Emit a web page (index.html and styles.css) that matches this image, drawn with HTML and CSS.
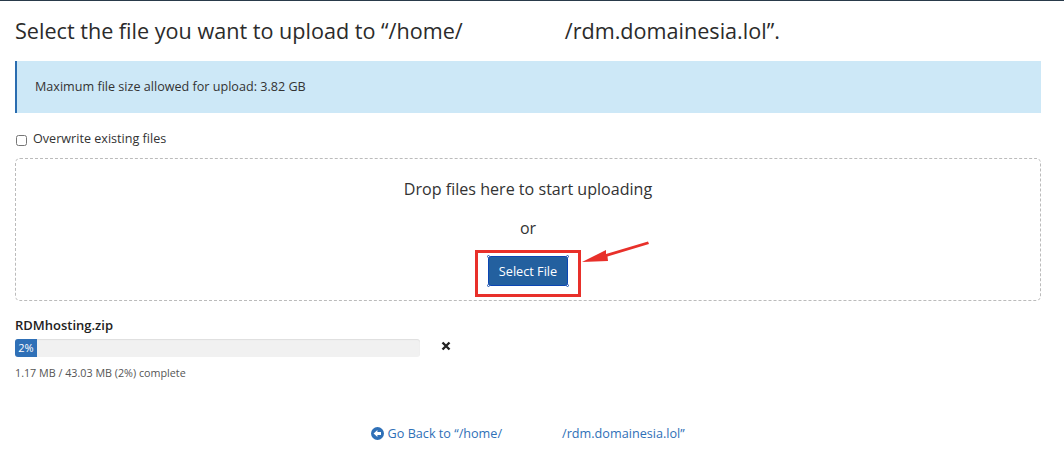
FILE: index.html
```html
<!DOCTYPE html>
<html lang="en">
<head>
    <meta charset="UTF-8">
    <title>File Upload</title>
    <link rel="stylesheet" href="styles.css">
</head>
<body>
    <main class="page">
        <h1>Select the file you want to upload to “/home/<span class="gap-title"></span>/rdm.domainesia.lol”.</h1>

        <div class="notice">Maximum file size allowed for upload: 3.82 GB</div>

        <label class="overwrite">
            <input type="checkbox"> Overwrite existing files
        </label>

        <section class="dropzone">
            <p class="drop-text">Drop files here to start uploading</p>
            <p class="drop-or">or</p>
            <div class="button-wrap">
                <button class="select-btn">Select File</button>
                <i class="handle tl"></i><i class="handle tr"></i><i class="handle bl"></i><i class="handle br"></i>
                <div class="callout"></div>
                <svg class="arrow" width="72" height="28" viewBox="0 0 72 28">
                    <path d="M0 21 L24 9 L24 13 L66 0.5 L67 3 L25.5 15.5 L26 20 Z" fill="#e8302a"/>
                </svg>
            </div>
        </section>

        <section class="upload">
            <div class="upload-name">RDMhosting.zip</div>
            <div class="upload-row">
                <div class="progress"><div class="progress-bar" style="width: 5.4%">2%</div></div>
                <svg class="cancel" width="10" height="10" viewBox="0 0 10 10">
                    <path d="M1.5 1.5 L8.5 8.5 M8.5 1.5 L1.5 8.5" stroke="#222" stroke-width="2.4" fill="none"/>
                </svg>
            </div>
            <div class="upload-status">1.17 MB / 43.03 MB (2%) complete</div>
        </section>

        <p class="back">
            <a href="#">
                <svg class="back-icon" width="13" height="13" viewBox="0 0 13 13">
                    <circle cx="6.5" cy="6.5" r="6.5" fill="#2f70b7"/>
                    <path d="M2.6 6.5 L6.4 2.9 V5 H10 V8 H6.4 V10.1 Z" fill="#fff"/>
                </svg>
                Go Back to “/home/<span class="gap-link"></span>/rdm.domainesia.lol”
            </a>
        </p>
    </main>
</body>
</html>
```

FILE: styles.css
```css
* {
    box-sizing: border-box;
}

html, body {
    height: 463px;
    overflow: hidden;
}

body {
    margin: 0;
    font-family: "Open Sans", sans-serif;
    color: #333;
    background-color: #fff;
    border-top: 1px solid #293a4a;
}

.page {
    padding: 0 23px 0 15px;
}

h1 {
    margin: 16px 0 0;
    font-size: 21.6px;
    line-height: 27px;
    font-weight: 400;
    color: #2b2b2b;
}

.gap-title {
    display: inline-block;
    width: 102px;
}

.gap-link {
    display: inline-block;
    width: 60px;
}

.notice {
    margin-top: 17px;
    height: 52px;
    padding-left: 18px;
    font-size: 12.6px;
    line-height: 51px;
    background-color: #cde8f7;
    border-left: 2px solid #2a6db0;
}

.overwrite {
    display: flex;
    align-items: center;
    margin-top: 16px;
    height: 18px;
    font-size: 12.6px;
}

.overwrite input {
    width: 11px;
    height: 11px;
    margin: 5px 6px 0 1px;
}

.dropzone {
    margin-top: 11px;
    height: 143px;
    border: 1px dashed #bbb;
    border-radius: 5px;
    text-align: center;
}

.drop-text {
    margin: 20px 0 0;
    font-size: 16.1px;
    line-height: 20px;
}

.drop-or {
    margin: 19px 0 0;
    font-size: 16px;
    line-height: 20px;
}

.button-wrap {
    position: relative;
    width: 80px;
    height: 30px;
    margin: 18px auto 0;
}

.select-btn {
    display: block;
    width: 100%;
    height: 100%;
    padding: 0;
    font-family: inherit;
    font-size: 12.7px;
    color: #fff;
    background-color: #23609f;
    border: 1px solid #0b46b4;
    border-radius: 3px;
}

.handle {
    position: absolute;
    width: 3px;
    height: 3px;
    background-color: #fff;
    border: 1px solid #1c55b5;
    border-radius: 50%;
}

.tl { left: -1px; top: -1px; }
.tr { right: -1px; top: -1px; }
.bl { left: -1px; bottom: -1px; }
.br { right: -1px; bottom: -1px; }

.callout {
    position: absolute;
    left: -13px;
    top: -6px;
    width: 106px;
    height: 47px;
    border: 3px solid #e8302a;
}

.arrow {
    position: absolute;
    left: 94px;
    top: -15px;
}

.upload {
    margin-top: 16px;
}

.upload-name {
    font-size: 13px;
    line-height: 17px;
    font-weight: 600;
    color: #222;
}

.upload-row {
    display: flex;
    align-items: center;
    margin-top: 5px;
}

.progress {
    width: 405px;
    height: 18px;
    background-color: #f1f1f1;
    border-radius: 3px;
    box-shadow: inset 0 1px 1px rgba(0,0,0,0.08);
    overflow: hidden;
}

.progress-bar {
    height: 100%;
    font-size: 11px;
    line-height: 18px;
    text-align: center;
    color: #fff;
    background-color: #2f70b7;
}

.cancel {
    margin: 0 0 5px 21px;
}

.upload-status {
    margin-top: 9px;
    font-size: 10.75px;
    line-height: 14px;
    color: #555;
}

.back {
    margin: 45px 0 0;
    text-align: center;
    font-size: 12.65px;
    line-height: 16px;
}

.back a {
    color: #2f70b7;
    text-decoration: none;
}

.back-icon {
    vertical-align: -2px;
}
```
